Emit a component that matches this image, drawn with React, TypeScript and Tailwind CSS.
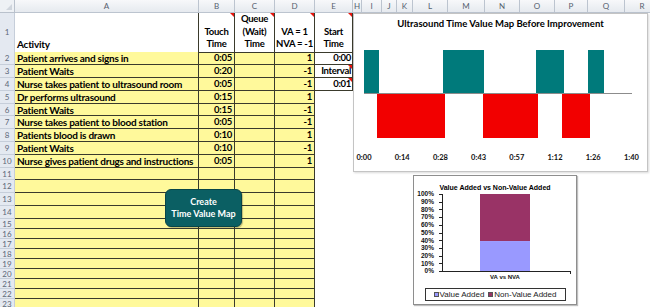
const COLS =
  "grid grid-cols-[15px_184px_36px_40px_40px_38px_9px_20px_15px_16px_35px_37px_35px_35px_33px_37px_35px]";

const LETTERS = ["A", "B", "C", "D", "E", "H", "I", "J", "K", "L", "M", "N", "O", "P", "Q", "R"];

const STEPS: [string, string, string][] = [
  ["Patient arrives and signs in", "0:05", "1"],
  ["Patient Waits", "0:20", "-1"],
  ["Nurse takes patient to ultrasound room", "0:05", "-1"],
  ["Dr performs ultrasound", "0:15", "1"],
  ["Patient Waits", "0:15", "-1"],
  ["Nurse takes patient to blood station", "0:05", "-1"],
  ["Patients blood is drawn", "0:10", "1"],
  ["Patient Waits", "0:10", "-1"],
  ["Nurse gives patient drugs and instructions", "0:05", "1"],
];

// rows 2..23
const HEIGHTS = [
  "h-[13px]", "h-[13px]", "h-[13px]", "h-[13px]", "h-[12px]", "h-[13px]", "h-[13px]",
  "h-[13px]", "h-[13px]", "h-[12px]", "h-[13px]", "h-[13px]", "h-[13px]",
  "h-[10px]", "h-[10px]", "h-[10px]", "h-[10px]", "h-[10px]", "h-[10px]", "h-[10px]",
  "h-[10px]", "h-[10px]",
];

const START: Record<number, string> = { 2: "0:00", 3: "Interval", 4: "0:01" };

function Flag() {
  return (
    <span className="absolute top-0 right-0 w-0 h-0 border-l-[4px] border-l-transparent border-t-[4px] border-t-[#e8140c]" />
  );
}

function RowNum({ n }: { n: number | string }) {
  return (
    <div className="bg-[#e4e9f1] border-b border-r border-[#c6ceda] flex items-center justify-center text-[8px] leading-none text-[#5d6878]">
      {n}
    </div>
  );
}

function TimeMap() {
  const teal = [
    [10, 25],
    [89, 130],
    [182, 210],
    [234, 250],
  ];
  const red = [
    [23, 91],
    [129, 184],
    [208, 236],
  ];
  const labels = ["0:00", "0:14", "0:28", "0:43", "0:57", "1:12", "1:26", "1:40"];
  return (
    <div className="absolute left-[353px] top-[13px] w-[295px] h-[159px] bg-white border border-[#c4c4c4] shadow-[1px_1px_2px_rgba(0,0,0,0.15)] flex flex-col">
      <div className="h-[19px] flex items-center justify-center text-[9.5px] font-bold text-black leading-none">
        Ultrasound Time Value Map Before Improvement
      </div>
      <svg width="293" height="138" className="block">
        {teal.map(([a, b]) => (
          <rect key={a} x={a} y={17} width={b - a} height={44} fill="#007a7b" />
        ))}
        {red.map(([a, b]) => (
          <rect key={a} x={a} y={60} width={b - a} height={45} fill="#f20000" />
        ))}
        <line x1={10} y1={60.5} x2={278} y2={60.5} stroke="#8c8c8c" strokeWidth={1} />
        {labels.map((l, i) => (
          <text
            key={l}
            x={10 + i * 38.2}
            y={127}
            textAnchor="middle"
            fontSize={7.5}
            fontWeight={700}
            fontFamily="Lato, sans-serif"
            fill="#111"
          >
            {l}
          </text>
        ))}
      </svg>
    </div>
  );
}

function ValueChart() {
  const ticks = [100, 90, 80, 70, 60, 50, 40, 30, 20, 10, 0];
  const y = (p: number) => 80 - p * 0.77;
  return (
    <div className="absolute left-[413px] top-[175px] w-[164px] h-[130px] bg-white border border-[#8e8e8e] shadow-[1px_1px_1px_rgba(0,0,0,0.25)] flex flex-col items-center font-['Liberation_Sans',Arial,sans-serif]">
      <div className="h-[15px] flex items-end text-[7px] font-bold leading-none text-black">
        Value Added vs Non-Value Added
      </div>
      <svg width="162" height="97" className="block">
        <rect x={66} y={y(100)} width={50} height={y(38.9) - y(100)} fill="#993366" />
        <rect x={66} y={y(38.9)} width={50} height={y(0) - y(38.9)} fill="#9999ff" />
        <line x1={28.5} y1={y(100)} x2={28.5} y2={y(0)} stroke="#222" strokeWidth={1} />
        <line x1={28} y1={y(0) + 0.5} x2={156} y2={y(0) + 0.5} stroke="#222" strokeWidth={1} />
        <line x1={156.5} y1={y(0)} x2={156.5} y2={y(0) + 3} stroke="#222" strokeWidth={1} />
        {ticks.map((t) => (
          <g key={t}>
            <line x1={25} y1={Math.round(y(t)) + 0.5} x2={28} y2={Math.round(y(t)) + 0.5} stroke="#222" strokeWidth={1} />
            <text x={20} y={y(t) + 2.3} textAnchor="end" fontSize={6.5} fontWeight={700} fill="#111">
              {t}%
            </text>
          </g>
        ))}
        <text x={91} y={88} textAnchor="middle" fontSize={6} fontWeight={700} fill="#111">
          VA vs NVA
        </text>
      </svg>
      <div className="w-[141px] h-[13px] border border-[#333] flex items-center justify-center gap-[4px] text-[8px] leading-none text-[#222]">
        <span className="flex items-center gap-[1px]">
          <span className="w-[5px] h-[5px] bg-[#9999ff] border border-[#555]" />
          Value Added
        </span>
        <span className="flex items-center gap-[1px]">
          <span className="w-[5px] h-[5px] bg-[#993366] border border-[#555]" />
          Non-Value Added
        </span>
      </div>
    </div>
  );
}

export default function App() {
  const head =
    "relative border-b border-r border-[#3a3a2c] flex flex-col justify-end items-center pb-[1px] text-[9.5px] tracking-[-0.25px] font-bold leading-[12.5px] whitespace-nowrap";
  return (
    <div className="relative w-[650px] h-[307px] overflow-hidden bg-white font-['Lato','Open_Sans',sans-serif] text-black">
      {/* column headers */}
      <div className={`${COLS} h-[13px]`}>
        <div className="relative bg-[#eef1f5] border-b border-r border-[#b9c1cc]">
          <span className="absolute right-[2px] bottom-[2px] w-0 h-0 border-l-[6px] border-l-transparent border-b-[6px] border-b-[#cfd5dd]" />
        </div>
        {LETTERS.map((l) => (
          <div
            key={l}
            className="bg-gradient-to-b from-[#f7f8fa] to-[#e6eaef] border-b border-r border-[#bcc4cf] flex items-center justify-center text-[8px] leading-none text-[#56616f]"
          >
            {l}
          </div>
        ))}
      </div>

      {/* row 1 */}
      <div className={`${COLS} h-[39px]`}>
        <RowNum n={1} />
        <div className="border-b border-r border-[#3a3a2c] flex items-end pl-[2px] pb-[1px] text-[10px] tracking-[-0.25px] font-bold leading-[12.5px]">
          Activity
        </div>
        <div className={head}>
          <Flag />
          <span>Touch</span>
          <span>Time</span>
        </div>
        <div className={head}>
          <Flag />
          <span>Queue</span>
          <span>(Wait)</span>
          <span>Time</span>
        </div>
        <div className={head}>
          <Flag />
          <span>VA = 1</span>
          <span>NVA = -1</span>
        </div>
        <div className={head}>
          <Flag />
          <span>Start</span>
          <span>Time</span>
        </div>
      </div>

      {/* rows 2..23 */}
      {HEIGHTS.map((h, i) => {
        const n = i + 2;
        const step = STEPS[i];
        const cell =
          "bg-[#fff99b] border-b border-r border-[#3a3a2c] flex items-center text-[9.5px] tracking-[-0.25px] font-bold leading-none whitespace-nowrap";
        return (
          <div key={n} className={`${COLS} ${h}`}>
            <RowNum n={n} />
            <div className="bg-[#fff99b] border-b border-r border-[#3a3a2c] flex items-center pl-[2px] text-[10px] tracking-[-0.25px] font-bold leading-none whitespace-nowrap">
              {step ? step[0] : ""}
            </div>
            <div className={`${cell} justify-end pr-[2px]`}>{step ? step[1] : ""}</div>
            <div className={cell} />
            <div className={`${cell} justify-end pr-[2px]`}>{step ? step[2] : ""}</div>
            {START[n] ? (
              <div className="relative border-b border-r border-[#3a3a2c] flex items-center justify-end pr-[1px] text-[9.5px] tracking-[-0.3px] font-bold leading-none whitespace-nowrap">
                {n > 2 && <Flag />}
                {START[n]}
              </div>
            ) : (
              <div />
            )}
          </div>
        );
      })}

      <TimeMap />
      <ValueChart />

      <button className="absolute left-[165px] top-[189px] w-[77px] h-[38px] rounded-[6px] bg-[#0b5f63] border border-[#084548] text-white text-[9px] font-bold leading-[12px] flex flex-col items-center justify-center shadow-[1px_1px_1px_rgba(0,0,0,0.25)]">
        <span>Create</span>
        <span>Time Value Map</span>
      </button>
    </div>
  );
}
